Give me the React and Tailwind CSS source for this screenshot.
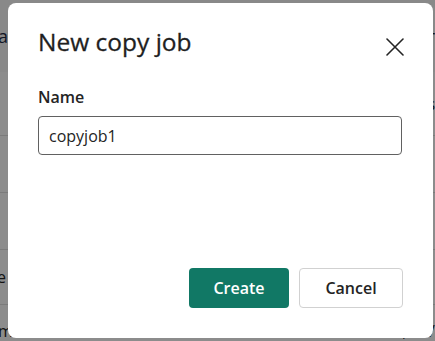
import React from "react";

export default function App() {
  const font = { fontFamily: '"Segoe UI", "Open Sans", "Noto Sans", sans-serif' };
  return (
    <div className="relative w-[435px] h-[341px] overflow-hidden bg-white" style={font}>
      {/* background page */}
      <div className="flex flex-col text-[16px] text-[#242424]">
        <div className="h-[72px] bg-[#fafafa] flex items-center justify-between">
          <span className="-ml-[2px] text-[18px] text-[#1f2a44]">a</span>
          <span className="text-[18px]">r</span>
        </div>
        <div className="h-[64px] border-b border-[#e0e0e0] flex items-center justify-end">
          <span>s</span>
        </div>
        <div className="h-[57px] border-b border-[#e0e0e0]"></div>
        <div className="h-[57px] border-b border-[#e0e0e0]"></div>
        <div className="h-[55px] border-b border-[#e0e0e0] flex items-center">
          <span className="-ml-[3px]">e</span>
        </div>
        <div className="h-[36px] flex items-end justify-between">
          <span className="-ml-[2px] leading-[20px]">mean</span>
          <span className="ml-[240px] leading-[20px]">Kerbe Eskens</span>
          <span className="leading-[20px]">5, 10/</span>
        </div>
      </div>

      {/* overlay */}
      <div className="absolute inset-0 bg-black/45"></div>

      {/* dialog */}
      <div className="absolute left-[8px] top-[3px] w-[425px] h-[335px] bg-white rounded-[8px] flex flex-col pl-[30px] pr-[30px]">
        <div className="flex items-start justify-between pt-[23px]">
          <h1 className="text-[24.5px] font-normal leading-[32px] text-[#1f1f1f] [-webkit-text-stroke:0.3px_#1f1f1f]">New copy job</h1>
          <button className="mt-[11px] mr-[-2px] w-[20px] h-[20px] flex items-center justify-center text-[#242424]">
            <svg width="18" height="18" viewBox="0 0 18 18" fill="none" stroke="currentColor" strokeWidth="1.6" strokeLinecap="round">
              <path d="M1 1 L17 17 M17 1 L1 17" />
            </svg>
          </button>
        </div>
        <label className="mt-[28px] text-[16px] font-semibold leading-[22px] text-[#242424]">Name</label>
        <div className="mt-[8px] w-[364px] h-[39px] border border-[#616161] rounded-[4px] flex items-center px-[10px]">
          <span className="text-[16px] text-[#242424]">copyjob1</span>
        </div>
        <div className="flex-1"></div>
        <div className="flex justify-end gap-[10px] pb-[30px]">
          <button className="w-[100px] h-[40px] rounded-[4px] bg-[#117865] text-white text-[16px] font-semibold">Create</button>
          <button className="w-[104px] h-[40px] rounded-[4px] bg-white border border-[#d1d1d1] text-[#242424] text-[16px] font-semibold">Cancel</button>
        </div>
      </div>
    </div>
  );
}
